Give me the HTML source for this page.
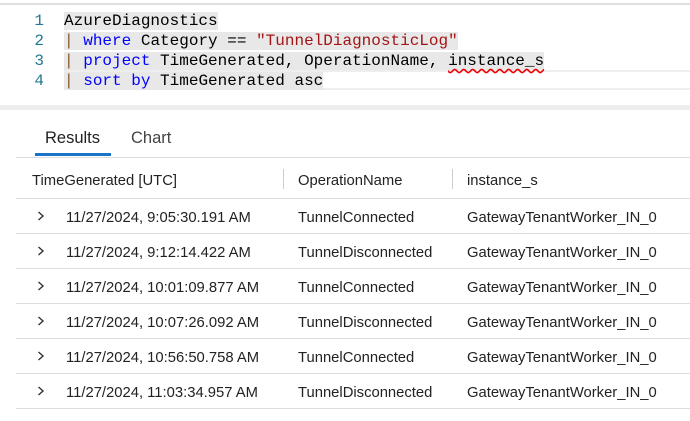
<!DOCTYPE html>
<html><head><style>
body{margin:0;width:690px;height:421px;background:#fff;position:relative;overflow:hidden;font-family:"Liberation Sans",sans-serif}
.a{position:absolute}
.code{font-family:"Liberation Mono",monospace;font-size:16px;line-height:20px;white-space:pre;color:#000}
.ln{color:#237893;width:20px;text-align:right}
.kw{color:#0000ff}.str{color:#a31515}
.sel{background:#e8e8e8}
.bar{color:#8a5a2a}
.t{font-size:14.8px;color:#222}
.hl{height:1px;background:#ddd;left:16px;width:674px}
</style></head><body>
<div class="a" style="left:0;top:3px;width:690px;height:2px;background:#e0e0e0"></div>
<div class="a" style="left:64px;top:70px;width:626px;height:20px;border-top:2px solid #eee;border-bottom:2px solid #eee;box-sizing:border-box;"></div>
<div class="a" style="left:0;top:105px;width:690px;height:5px;background:#eee"></div>
<div class="a code ln" style="left:24px;top:11px">1<br>2<br>3<br>4</div>
<div class="a code" style="left:64px;top:11px"><span class="sel">AzureDiagnostics</span>
<span class="sel"><span class="bar">|</span> <span class="kw">where</span> Category == <span class="str">"TunnelDiagnosticLog"</span></span>
<span class="sel"><span class="bar">|</span> <span class="kw">project</span> TimeGenerated, OperationName, <span style="text-decoration:underline wavy #e00;text-underline-offset:3px">instance_s</span></span>
<span class="sel"><span class="bar">|</span> <span class="kw">sort</span> <span class="kw">by</span> TimeGenerated asc</span></div>
<div class="a" style="left:45px;top:129px;font-size:16.5px;color:#222">Results</div>
<div class="a" style="left:131px;top:129px;font-size:16.5px;color:#444">Chart</div>
<div class="a" style="left:35px;top:153px;width:76px;height:3px;background:#1a73c8"></div>
<div class="a hl" style="top:157px"></div>
<div class="a t" style="left:32px;top:173px">TimeGenerated [UTC]</div>
<div class="a" style="left:283px;top:169px;width:1px;height:20px;background:#ccc"></div>
<div class="a t" style="left:298px;top:173px">OperationName</div>
<div class="a" style="left:452px;top:169px;width:1px;height:20px;background:#ccc"></div>
<div class="a t" style="left:467px;top:173px">instance_s</div>
<div class="a hl" style="top:198px"></div>
<div id="rows"></div>
<script>
var d=[["11/27/2024, 9:05:30.191 AM","TunnelConnected"],["11/27/2024, 9:12:14.422 AM","TunnelDisconnected"],["11/27/2024, 10:01:09.877 AM","TunnelConnected"],["11/27/2024, 10:07:26.092 AM","TunnelDisconnected"],["11/27/2024, 10:56:50.758 AM","TunnelConnected"],["11/27/2024, 11:03:34.957 AM","TunnelDisconnected"]];
var h="";d.forEach(function(r,i){var y=198+35*i;
h+='<svg class="a" style="left:36px;top:'+(y+12)+'px" width="10" height="12"><path d="M2.5 2 L7 6 L2.5 10" fill="none" stroke="#333" stroke-width="1.4"/></svg>';
h+='<div class="a t" style="left:66px;top:'+(y+12)+'px">'+r[0]+'</div>';
h+='<div class="a t" style="left:298px;top:'+(y+12)+'px">'+r[1]+'</div>';
h+='<div class="a t" style="left:467px;top:'+(y+12)+'px">GatewayTenantWorker_IN_0</div>';
h+='<div class="a hl" style="top:'+(y+35)+'px"></div>';});
document.getElementById("rows").innerHTML=h;
</script>
</body></html>
